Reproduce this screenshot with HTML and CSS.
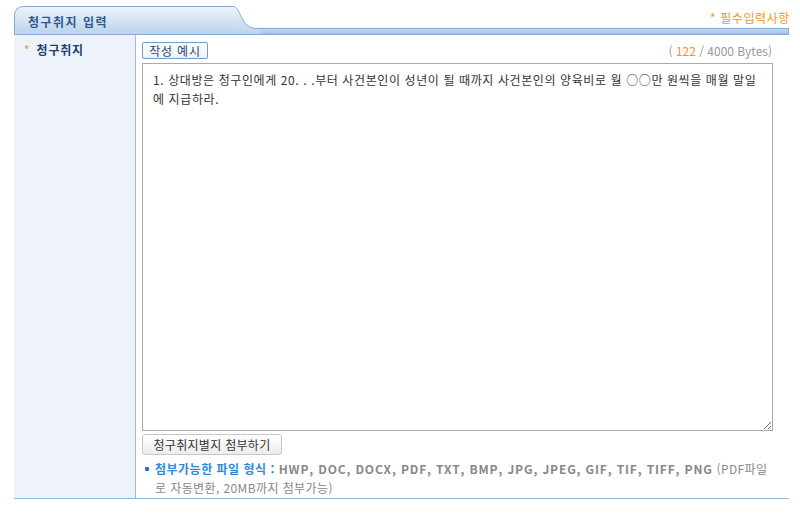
FILE: index.html
```html
<!DOCTYPE html>
<html lang="ko">
<head>
<meta charset="utf-8">
<title>청구취지 입력</title>
<link rel="stylesheet" href="styles.css">
</head>
<body>
<div class="wrap">
  <div class="head">
    <div class="tab"><span class="tab-title">청구취지 입력</span></div>
    <svg class="curve" width="30" height="29" viewBox="0 0 30 29" aria-hidden="true">
      <defs>
        <linearGradient id="g" x1="0" y1="0" x2="0" y2="1">
          <stop offset="0" stop-color="#eef4fb"/>
          <stop offset="1" stop-color="#bcd2ec"/>
        </linearGradient>
      </defs>
      <path d="M0 0.5 L2 0.5 C10 0.5 9 22.5 26 22.5 L30 22.5 L30 28.5 L0 28.5 Z" fill="url(#g)"/>
      <path d="M0 0.5 L2 0.5 C10 0.5 9 22.5 26 22.5 L30 22.5" fill="none" stroke="#86a9d3" stroke-width="1"/>
      <path d="M0 28.5 L30 28.5" stroke="#86a9d3" stroke-width="1"/>
    </svg>
    <div class="rest">
      <div class="req">* 필수입력사항</div>
      <div class="bar"></div>
    </div>
  </div>
  <div class="row">
    <div class="label"><span class="dot">*</span> 청구취지</div>
    <div class="content">
      <div class="toprow">
        <button class="btn-ex" type="button">작성 예시</button>
        <span class="bytes">( <em>122</em> / 4000 Bytes)</span>
      </div>
      <textarea class="ta">1. 상대방은 청구인에게 20. . .부터 사건본인이 성년이 될 때까지 사건본인의 양육비로 월 ○○만 원씩을 매월 말일에 지급하라.</textarea>
      <button class="btn-att" type="button">청구취지별지 첨부하기</button>
      <p class="info"><b class="blue">첨부가능한 파일 형식 :</b> <b class="ext">HWP, DOC, DOCX, PDF, TXT, BMP, JPG, JPEG, GIF, TIF, TIFF, PNG</b> <span>(PDF파일</span><span>로 자동변환, 20MB까지 첨부가능)</span></p>
    </div>
  </div>
</div>
</body>
</html>
```

FILE: styles.css
```css
* { box-sizing: border-box; }
html, body { margin: 0; padding: 0; background: #fff; }
body {
  font-family: "Noto Sans CJK KR", "Noto Sans", "Liberation Sans", sans-serif;
  font-size: 12px;
  color: #333;
}
.wrap {
  width: 775px;
  margin: 6px 0 0 14px;
}
.head {
  display: flex;
  height: 29px;
}
.tab {
  width: 217px;
  height: 29px;
  border: 1px solid #86a9d3;
  border-right: none;
  border-top-left-radius: 9px;
  background: linear-gradient(#eef4fb, #bcd2ec);
  display: flex;
  align-items: center;
  padding-left: 13px;
  padding-top: 1px;
}
.tab-title {
  font-weight: bold;
  color: #2f5a8e;
  font-size: 12px;
  letter-spacing: 1.5px;
}
.curve { display: block; flex: none; }
.rest {
  flex: 1;
  display: flex;
  flex-direction: column;
  justify-content: flex-end;
}
.req {
  text-align: right;
  color: #f7931e;
  font-size: 12px;
  line-height: 14px;
  margin-bottom: 3px;
  margin-right: -1px;
  letter-spacing: 0.6px;
}
.bar {
  height: 7px;
  border: 1px solid #86a9d3;
  border-left: none;
  background: linear-gradient(#c3d6ee, #a6c1e3);
}
.row {
  display: flex;
  border-bottom: 1px solid #8fb5e6;
  min-height: 464px;
}
.label {
  width: 122px;
  flex: none;
  background: #eef3fb;
  border-right: 1px solid #9dbbe3;
  padding: 6px 0 0 10px;
  font-weight: bold;
  color: #1f3f6f;
  font-size: 12px;
  letter-spacing: 0.8px;
}
.dot { color: #f7931e; font-weight: normal; margin-right: 2px; }
.content {
  flex: 1;
  padding: 7px 16px 0 6px;
  display: flex;
  flex-direction: column;
  align-items: flex-start;
}
.toprow {
  display: flex;
  justify-content: space-between;
  align-items: center;
  align-self: stretch;
  height: 17px;
}
.btn-ex {
  font: inherit;
  font-size: 12px;
  height: 17px;
  width: 66px;
  padding: 0;
  line-height: 15px;
  color: #2b4877;
  border: 1px solid #7d9ac3;
  border-radius: 2px;
  background: linear-gradient(#ffffff, #edf2f9);
  letter-spacing: 0.8px;
}
.bytes { color: #999; font-size: 12px; margin-right: 1px; }
.bytes em { font-style: normal; color: #f7931e; }
.ta {
  display: block;
  align-self: stretch;
  margin-top: 4px;
  height: 368px;
  border: 1px solid #aaa;
  padding: 6px 10px;
  font: inherit;
  font-size: 12px;
  line-height: 19px;
  letter-spacing: 0.6px;
  color: #333;
  resize: both;
  outline: none;
}
.btn-att {
  font: inherit;
  font-size: 12px;
  margin-top: 3px;
  height: 21px;
  width: 140px;
  padding: 0;
  color: #333;
  border: 1px solid #c8c8c8;
  border-radius: 3px;
  background: linear-gradient(#ffffff, #ececec);
  letter-spacing: 0.3px;
}
.info {
  margin: 4px 0 0 0;
  padding-left: 13px;
  line-height: 19px;
  color: #888;
  font-size: 12px;
  letter-spacing: 0.4px;
  background: radial-gradient(circle at 5px 10px, #2e6db5 0, #2e6db5 2px, transparent 2.5px) no-repeat;
}
.blue { color: #2f8ad8; letter-spacing: 0.5px; }
.ext { color: #888; letter-spacing: 0.85px; }
```
